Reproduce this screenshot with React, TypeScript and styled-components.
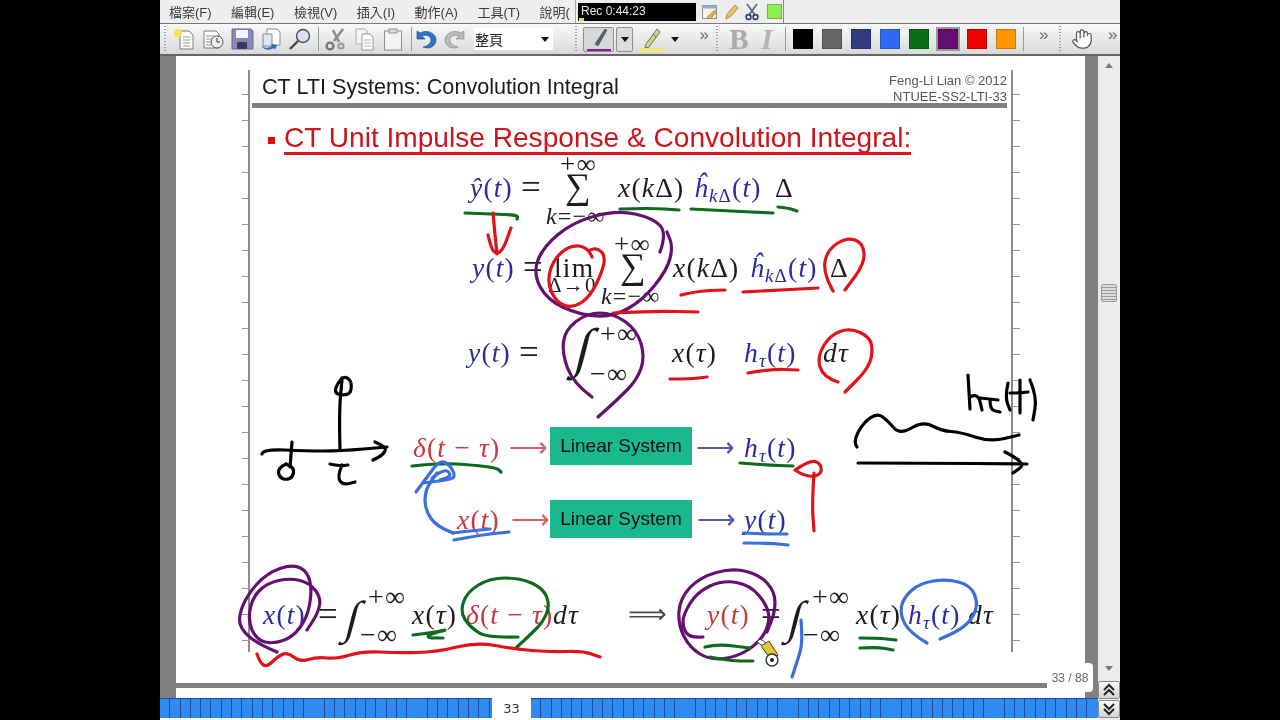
import styled, { createGlobalStyle } from "styled-components";
import { Hand } from "lucide-react";

const GlobalStyle = createGlobalStyle`
  html, body {
    margin: 0;
    height: 100%;
    background: #000;
    overflow: hidden;
  }
`;

const SANS = `"Liberation Sans", "Noto Sans CJK TC", sans-serif`;
const SERIF = `"Liberation Serif", "DejaVu Serif", serif`;

const BLUE = "#2b2b9e";
const RED = "#c8383c";
const INK = "#1c1c1c";

const MENU = ["檔案(F)", "編輯(E)", "檢視(V)", "插入(I)", "動作(A)", "工具(T)", "說明("];
const SWATCHES = ["#000000", "#666666", "#333a80", "#2f6bf0", "#0c6b16", "#660b70", "#f20000", "#ff9500"];

type Stroke = { c: string; p: number[] };

const R = "#e0121a";
const G = "#0e6b1e";
const B = "#3b6fdc";
const P = "#651070";
const K = "#000000";

// hand-written annotations, in page coordinates
const STROKES: Stroke[] = [
  { c: G, p: [465, 213, 490, 214, 518, 215, 517, 219] },
  { c: R, p: [493, 213, 495, 235, 497, 254] },
  { c: R, p: [488, 235, 491, 248, 496, 254, 503, 250, 511, 228] },
  { c: G, p: [620, 209, 650, 208, 679, 210] },
  { c: G, p: [691, 209, 730, 211, 773, 213] },
  { c: G, p: [778, 207, 788, 208, 797, 211] },
  { c: P, p: [660, 252, 667, 233, 653, 218, 617, 210, 573, 222, 543, 247, 533, 273, 547, 300, 580, 315, 613, 317, 643, 300, 667, 270, 673, 247, 667, 232] },
  { c: R, p: [592, 257, 588, 247, 570, 245, 553, 260, 547, 283, 557, 303, 573, 308, 590, 297, 603, 270, 605, 255, 597, 248, 590, 250] },
  { c: R, p: [681, 295, 697, 291, 725, 290] },
  { c: R, p: [743, 292, 780, 290, 818, 288] },
  { c: R, p: [833, 291, 823, 273, 827, 250, 847, 237, 863, 243, 865, 263, 845, 290] },
  { c: R, p: [613, 313, 653, 311, 698, 312] },
  { c: P, p: [592, 397, 573, 383, 562, 353, 565, 330, 587, 313, 613, 313, 637, 330, 645, 357, 637, 380, 617, 400, 598, 417] },
  { c: R, p: [670, 379, 690, 379, 707, 377] },
  { c: R, p: [748, 373, 770, 369, 798, 370] },
  { c: R, p: [838, 382, 823, 377, 817, 357, 830, 335, 850, 328, 870, 337, 873, 353, 867, 370, 845, 392] },
  { c: K, p: [262, 454, 263, 449, 307, 451, 340, 451, 387, 447] },
  { c: K, p: [375, 442, 387, 447, 383, 455, 373, 460] },
  { c: K, p: [340, 450, 339, 413, 342, 380] },
  { c: K, p: [342, 378, 330, 393, 350, 396, 352, 383, 347, 377, 342, 378] },
  { c: K, p: [292, 442, 291, 455, 290, 467] },
  { c: K, p: [286, 464, 278, 468, 279, 477, 286, 480, 293, 477, 294, 468, 286, 464] },
  { c: K, p: [330, 464, 340, 466, 348, 465] },
  { c: K, p: [342, 465, 337, 477, 343, 485, 355, 482] },
  { c: G, p: [412, 466, 440, 463, 473, 465, 497, 468, 501, 472] },
  { c: B, p: [453, 533, 437, 527, 425, 510, 425, 490, 437, 473] },
  { c: B, p: [416, 492, 427, 477, 440, 460, 450, 465, 456, 477, 447, 480, 423, 483] },
  { c: B, p: [432, 478, 445, 468, 452, 476, 440, 480] },
  { c: B, p: [453, 533, 470, 531, 490, 529] },
  { c: B, p: [454, 540, 480, 535, 509, 532] },
  { c: G, p: [740, 463, 765, 465, 793, 466] },
  { c: R, p: [795, 470, 810, 460, 820, 463, 822, 472, 815, 477, 803, 475, 795, 470] },
  { c: R, p: [814, 473, 812, 503, 814, 531] },
  { c: B, p: [744, 533, 767, 534, 787, 534] },
  { c: B, p: [744, 543, 767, 543, 788, 545] },
  { c: K, p: [857, 447, 853, 442, 863, 423, 877, 413, 887, 420, 900, 435, 923, 421, 942, 431, 960, 432, 990, 442, 1019, 435] },
  { c: K, p: [858, 463, 923, 463, 1027, 464] },
  { c: K, p: [1005, 452, 1027, 463, 1013, 473] },
  { c: K, p: [968, 375, 969, 392, 970, 409] },
  { c: K, p: [970, 397, 978, 393, 982, 410] },
  { c: K, p: [980, 398, 990, 399, 998, 400] },
  { c: K, p: [990, 400, 990, 410, 1000, 412] },
  { c: K, p: [1008, 383, 1005, 397, 1010, 410] },
  { c: K, p: [1020, 380, 1020, 396, 1020, 413] },
  { c: K, p: [1010, 393, 1019, 393, 1028, 392] },
  { c: K, p: [1030, 380, 1037, 397, 1033, 420] },
  { c: P, p: [277, 652, 260, 645, 243, 632, 238, 618, 247, 595, 267, 573, 293, 564, 308, 572, 312, 592, 307, 618, 293, 637, 273, 644, 257, 640, 248, 622, 252, 598, 267, 583, 290, 578, 310, 583, 321, 598, 318, 613, 307, 630] },
  { c: G, p: [413, 635, 430, 633, 450, 629, 430, 634, 427, 638, 443, 638] },
  { c: G, p: [518, 637, 487, 638, 470, 627, 460, 612, 467, 592, 490, 578, 520, 578, 543, 588, 550, 605, 543, 622, 530, 635, 517, 647] },
  { c: R, p: [257, 654, 260, 663, 267, 667, 277, 657, 287, 652, 300, 662, 317, 657, 337, 659, 363, 651, 397, 653, 437, 652, 477, 642, 513, 649, 550, 652, 583, 651, 600, 657] },
  { c: P, p: [703, 637, 690, 638, 683, 628, 683, 615, 697, 592, 723, 580, 750, 585, 767, 605, 770, 622, 760, 642, 737, 657, 710, 660, 690, 648, 678, 625, 680, 598, 700, 577, 733, 568, 760, 575, 775, 592, 775, 612, 767, 632] },
  { c: G, p: [705, 647, 717, 644, 750, 648] },
  { c: G, p: [710, 657, 730, 661, 753, 661] },
  { c: B, p: [801, 620, 803, 642, 797, 662, 792, 677] },
  { c: G, p: [860, 638, 877, 638, 896, 640] },
  { c: G, p: [860, 648, 877, 647, 893, 650] },
  { c: B, p: [927, 643, 910, 633, 900, 615, 903, 598, 920, 583, 947, 579, 970, 585, 978, 602, 973, 618, 960, 630, 940, 639] },
];

const toPath = (p: number[]) => {
  let d = `M${p[0]} ${p[1]}`;
  for (let i = 2; i < p.length - 2; i += 2) {
    d += ` Q${p[i]} ${p[i + 1]} ${(p[i] + p[i + 2]) / 2} ${(p[i + 1] + p[i + 3]) / 2}`;
  }
  return `${d} L${p[p.length - 2]} ${p[p.length - 1]}`;
};

const App = () => (
  <>
    <GlobalStyle />
    <Window>
      <MenuBar>
        <MenuList>
          {MENU.map((m) => (
            <MenuItem key={m}>{m}</MenuItem>
          ))}
        </MenuList>
        <RecPanel>
          <RecBox>Rec 0:44:23</RecBox>
          <svg width="18" height="18" viewBox="0 0 18 18">
            <rect x="1.5" y="2.5" width="14" height="13" fill="#fbf6e0" stroke="#8a8f9a" />
            <rect x="1.5" y="2.5" width="14" height="3" fill="#8fa9d8" />
            <path d="M6 14l8-7 2 2-7 7z" fill="#e5b24a" stroke="#9b7a24" strokeWidth=".6" />
          </svg>
          <svg width="16" height="18" viewBox="0 0 16 18">
            <path d="M2 16l1-5 8-9 3 3-8 9z" fill="#eec46a" stroke="#b58a32" />
          </svg>
          <svg width="14" height="18" viewBox="0 0 14 18">
            <path d="M2 1l8 11M12 1L4 12" stroke="#5b6270" strokeWidth="1.6" />
            <circle cx="3.5" cy="14" r="2.4" fill="none" stroke="#2f3e78" strokeWidth="1.6" />
            <circle cx="10.5" cy="14" r="2.4" fill="none" stroke="#2f3e78" strokeWidth="1.6" />
          </svg>
          <GreenSquare />
        </RecPanel>
      </MenuBar>

      <Toolbar>
        <Gripper $ml={4} />
        <IconGroup $ml={6} $gap={5}>
          <svg width="24" height="24" viewBox="0 0 24 24">
            <path d="M8 4h9l4 4v14H8z" fill="#fff" stroke="#7a7a7a" />
            <path d="M11 10h7M11 13h7M11 16h7M11 19h7" stroke="#9a9a9a" />
            <circle cx="6" cy="6" r="4" fill="#ffe14d" />
          </svg>
          <svg width="24" height="24" viewBox="0 0 24 24">
            <path d="M3 4h12l3 3v14H3z" fill="#fff" stroke="#7a7a7a" />
            <path d="M5 9h8M5 12h6M5 15h5M5 18h5" stroke="#8a8a8a" />
            <circle cx="16" cy="15" r="6" fill="#eee" stroke="#555" />
            <path d="M16 11v4h3" stroke="#333" fill="none" />
          </svg>
          <svg width="24" height="24" viewBox="0 0 24 24">
            <path d="M2 2h19l2 2v18H2z" fill="#8a86b8" stroke="#6a6699" />
            <rect x="6" y="3" width="12" height="8" fill="#f4f4fa" />
            <rect x="7" y="15" width="10" height="7" fill="#3c3a5c" />
          </svg>
          <svg width="24" height="24" viewBox="0 0 24 24">
            <path d="M8 2h10l3 3v13H8z" fill="#fff" stroke="#8a8a8a" />
            <path d="M4 7h9v12H4z" fill="#dfe6f2" stroke="#7a88a8" />
            <path d="M2 18c2 3 7 4 11 1l-1-2 6 1-2 5-1-2c-5 3-11 2-13-3z" fill="#2f6fc0" />
          </svg>
          <svg width="24" height="24" viewBox="0 0 24 24">
            <circle cx="15" cy="9" r="6.5" fill="#d4e4f6" stroke="#4a4a4a" strokeWidth="1.4" />
            <path d="M10 14l-8 8" stroke="#444" strokeWidth="2.4" />
          </svg>
        </IconGroup>
        <ToolSep $ml={6} />
        <IconGroup $ml={4} $gap={5}>
          <svg width="24" height="24" viewBox="0 0 24 24">
            <path d="M20 2l-9 12M10 3l6 12" stroke="#8d8d8d" strokeWidth="2.6" />
            <circle cx="7" cy="19" r="3.4" fill="none" stroke="#777" strokeWidth="2.4" />
            <circle cx="18" cy="19" r="2.6" fill="none" stroke="#999" strokeWidth="2" />
          </svg>
          <svg width="24" height="24" viewBox="0 0 24 24">
            <path d="M4 2h9l2 2v13H4z" fill="#f6f6f6" stroke="#aaa" />
            <path d="M10 7h8l3 3v13H10z" fill="#fff" stroke="#999" />
            <path d="M12 13h7M12 16h7M12 19h7" stroke="#b5b5b5" />
          </svg>
          <svg width="24" height="24" viewBox="0 0 24 24">
            <rect x="3.5" y="4" width="17" height="19" fill="#f4f4f4" stroke="#8f8f8f" />
            <rect x="8" y="2" width="8" height="4" fill="#ddd" stroke="#8f8f8f" />
          </svg>
        </IconGroup>
        <ToolSep $ml={6} />
        <IconGroup $ml={2} $gap={5}>
          <svg width="24" height="24" viewBox="0 0 24 24">
            <path d="M3 4v8h8L8 9c4-2 9 0 9 4 0 3-3 6-8 7 8 3 13-2 13-7C22 6 13 2 6 6z" fill="#2f74c8" stroke="#1e4f94" strokeWidth=".7" />
          </svg>
          <svg width="24" height="24" viewBox="0 0 24 24">
            <path d="M21 4v8h-8l3-3c-4-2-9 0-9 4 0 3 3 6 8 7-8 3-13-2-13-7C2 6 11 2 18 6z" fill="#b8b8b8" stroke="#8c8c8c" strokeWidth=".7" />
          </svg>
        </IconGroup>
        <ZoomSelect>
          整頁
          <DropArrow />
        </ZoomSelect>
        <Gripper $ml={22} />
        <PenButton>
          <svg width="24" height="24" viewBox="0 0 24 24">
            <path d="M8 17L18 2l2 1L11 19z" fill="#55606e" stroke="#3c4450" strokeWidth=".6" />
            <path d="M0 23h24" stroke="#8a1a90" strokeWidth="2" />
          </svg>
        </PenButton>
        <PenDrop>
          <DropArrow />
        </PenDrop>
        <HighlightSlot>
          <svg width="25" height="26" viewBox="0 0 25 26">
            <path d="M7 18l-1 4 4-1 11-15-3-3z" fill="#c9d888" stroke="#6b7440" />
            <path d="M14 8l3 3" stroke="#6b7440" />
            <path d="M0 24h24" stroke="#f4ee5a" strokeWidth="3" />
          </svg>
        </HighlightSlot>
        <ArrowSlot>
          <DropArrow />
        </ArrowSlot>
        <More $ml={18}>»</More>
        <Gripper $ml={5} />
        <BoldGlyph>B</BoldGlyph>
        <ItalicGlyph>I</ItalicGlyph>
        <ToolSep $ml={8} />
        <SwatchRow>
          {SWATCHES.map((c, i) => (
            <Swatch key={c} $color={c} $selected={i === 5} />
          ))}
        </SwatchRow>
        <ToolSep $ml={7} />
        <More $ml={15}>»</More>
        <Gripper $ml={8} />
        <HandSlot>
          <Hand size={22} strokeWidth={1.3} color="#555" fill="#fff" />
        </HandSlot>
        <More $ml={15}>»</More>
      </Toolbar>

      <Body>
        <LeftColumn>
          <DocArea>
            <Page>
              <Sheet>
                <SheetHeader>
                  <SheetTitle>CT LTI Systems: Convolution Integral</SheetTitle>
                  <Credit>
                    <span>Feng-Li Lian © 2012</span>
                    <span>NTUEE-SS2-LTI-33</span>
                  </Credit>
                </SheetHeader>
                <HeadRule />
                <Heading>
                  <Bullet />
                  <HeadingText>CT Unit Impulse Response &amp; Convolution Integral:</HeadingText>
                </Heading>
              </Sheet>

              {/* first formula */}
              <Formula $x={470} $y={174} $c={BLUE}><i>ŷ</i>(<i>t</i>) <Eq>=</Eq></Formula>
              <Limit $x={560} $y={151} $size={27}>+∞</Limit>
              <BigSum $x={565} $y={167}>∑</BigSum>
              <Limit $x={546} $y={204} $size={24}><i>k</i>=−∞</Limit>
              <Formula $x={618} $y={174}><i>x</i>(<i>k</i>Δ)</Formula>
              <Formula $x={694} $y={174} $c={BLUE}><i>ĥ</i><Sub><i>k</i>Δ</Sub>(<i>t</i>)</Formula>
              <Formula $x={775} $y={174}>Δ</Formula>

              {/* second formula */}
              <Formula $x={472} $y={254} $c={BLUE}><i>y</i>(<i>t</i>) <Eq>=</Eq></Formula>
              <Formula $x={554} $y={254}>lim</Formula>
              <Limit $x={548} $y={275} $size={21}>Δ→0</Limit>
              <Limit $x={614} $y={231} $size={27}>+∞</Limit>
              <BigSum $x={620} $y={247}>∑</BigSum>
              <Limit $x={601} $y={284} $size={24}><i>k</i>=−∞</Limit>
              <Formula $x={673} $y={254}><i>x</i>(<i>k</i>Δ)</Formula>
              <Formula $x={750} $y={254} $c={BLUE}><i>ĥ</i><Sub><i>k</i>Δ</Sub>(<i>t</i>)</Formula>
              <Formula $x={830} $y={254}>Δ</Formula>

              {/* third formula */}
              <Formula $x={468} $y={339} $c={BLUE}><i>y</i>(<i>t</i>) <Eq>=</Eq></Formula>
              <BigInt $x={577} $y={318} $size={54}>∫</BigInt>
              <Limit $x={600} $y={320} $size={28}>+∞</Limit>
              <Limit $x={590} $y={360} $size={28}>−∞</Limit>
              <Formula $x={672} $y={339}><i>x</i>(<i>τ</i>)</Formula>
              <Formula $x={744} $y={339} $c={BLUE}><i>h</i><Sub><i>τ</i></Sub>(<i>t</i>)</Formula>
              <Formula $x={823} $y={339}><i>d</i><i>τ</i></Formula>

              {/* block diagram */}
              <Formula $x={413} $y={434} $c={RED}><i>δ</i>(<i>t</i> − <i>τ</i>)</Formula>
              <LongArrow $x={509} $y={433} $c={RED}>⟶</LongArrow>
              <SystemBox $x={550} $y={427}>Linear System</SystemBox>
              <LongArrow $x={696} $y={433} $c={BLUE}>⟶</LongArrow>
              <Formula $x={744} $y={434} $c={BLUE}><i>h</i><Sub><i>τ</i></Sub>(<i>t</i>)</Formula>

              <Formula $x={457} $y={506} $c={RED}><i>x</i>(<i>t</i>)</Formula>
              <LongArrow $x={511} $y={505} $c={RED}>⟶</LongArrow>
              <SystemBox $x={550} $y={500}>Linear System</SystemBox>
              <LongArrow $x={697} $y={505} $c={BLUE}>⟶</LongArrow>
              <Formula $x={744} $y={506} $c={BLUE}><i>y</i>(<i>t</i>)</Formula>

              {/* bottom line */}
              <Formula $x={263} $y={601} $c={BLUE}><i>x</i>(<i>t</i>)</Formula>
              <Formula $x={318} $y={601}><Eq>=</Eq></Formula>
              <BigInt $x={347} $y={588} $size={46}>∫</BigInt>
              <Limit $x={368} $y={583} $size={28}>+∞</Limit>
              <Limit $x={360} $y={621} $size={28}>−∞</Limit>
              <Formula $x={412} $y={601}><i>x</i>(<i>τ</i>)</Formula>
              <Formula $x={466} $y={601} $c={RED}><i>δ</i>(<i>t</i> − <i>τ</i>)</Formula>
              <Formula $x={553} $y={601}><i>d</i><i>τ</i></Formula>
              <LongArrow $x={628} $y={600} $c={INK}>⟹</LongArrow>
              <Formula $x={707} $y={601} $c={RED}><i>y</i>(<i>t</i>)</Formula>
              <Formula $x={761} $y={601}><Eq>=</Eq></Formula>
              <BigInt $x={790} $y={588} $size={46}>∫</BigInt>
              <Limit $x={812} $y={583} $size={28}>+∞</Limit>
              <Limit $x={803} $y={621} $size={28}>−∞</Limit>
              <Formula $x={856} $y={601}><i>x</i>(<i>τ</i>)</Formula>
              <Formula $x={908} $y={601} $c={BLUE}><i>h</i><Sub><i>τ</i></Sub>(<i>t</i>)</Formula>
              <Formula $x={968} $y={601}><i>d</i><i>τ</i></Formula>

              <InkLayer viewBox="176 56 909 627">
                {STROKES.map((s, i) => (
                  <path key={i} d={toPath(s.p)} stroke={s.c} strokeWidth={3.2} fill="none" strokeLinecap="round" strokeLinejoin="round" />
                ))}
                <path d="M757 642l7 5 4-3-8-5z" fill="#fff" stroke="#444" />
                <path d="M761 646l8-5 9 14-6 6z" fill="#e7c53a" stroke="#444" />
                <circle cx="772" cy="660" r="6" fill="#fff" stroke="#333" strokeWidth="1.4" />
                <circle cx="772" cy="660" r="2" fill="#222" />
              </InkLayer>
            </Page>
            <PageShadow />
            <PageFoot />
          </DocArea>
          <SlideStrip>
            <StripTrack $width={332} />
            <StripNumber>33</StripNumber>
            <StripTrack />
          </SlideStrip>
        </LeftColumn>

        <ScrollColumn>
          <ScrollTrack>
            <ScrollArrow $up />
            <ScrollThumb />
            <ScrollArrow $end />
          </ScrollTrack>
          <PageButton>
            <svg width="14" height="14" viewBox="0 0 14 14">
              <path d="M2 7l5-5 5 5M2 12l5-5 5 5" fill="none" stroke="#222" strokeWidth="2" />
            </svg>
          </PageButton>
          <PageButton>
            <svg width="14" height="14" viewBox="0 0 14 14">
              <path d="M2 2l5 5 5-5M2 7l5 5 5-5" fill="none" stroke="#222" strokeWidth="2" />
            </svg>
          </PageButton>
        </ScrollColumn>
      </Body>
      <PageTip>33 / 88</PageTip>
    </Window>
  </>
);

export default App;

const Window = styled.div`
  position: relative;
  width: 960px;
  height: 720px;
  margin: 0 auto;
  display: flex;
  flex-direction: column;
  background: #ececec;
  overflow: hidden;
  font-family: ${SANS};
  filter: blur(0.35px);
`;

const MenuBar = styled.div`
  display: flex;
  height: 23px;
  background: #efefef;
`;

const MenuList = styled.div`
  display: flex;
  align-items: center;
  gap: 19.5px;
  width: 415px;
  padding-left: 9px;
  box-sizing: border-box;
  white-space: nowrap;
`;

const MenuItem = styled.span`
  flex: none;
  font-size: 13px;
  color: #3a3a3a;
`;

const RecPanel = styled.div`
  display: flex;
  align-items: center;
  gap: 5px;
  width: 209px;
  height: 23px;
  padding-left: 2px;
  box-sizing: border-box;
  border-right: 1px solid #8a8a8a;
  border-left: 1px solid #aaa;
  background: #eee;
`;

const RecBox = styled.div`
  position: relative;
  width: 118px;
  height: 18px;
  box-sizing: border-box;
  padding: 1px 0 0 3px;
  background: #000;
  color: #eaeaea;
  font-size: 12px;
  line-height: 15px;

  &::after {
    content: "";
    position: absolute;
    left: 1px;
    bottom: 0;
    width: 5px;
    height: 3px;
    background: #d9d94a;
  }
`;

const GreenSquare = styled.div`
  width: 13px;
  height: 13px;
  margin-left: 3px;
  background: #8fef4f;
  border: 1px solid #8b9a78;
`;

const Toolbar = styled.div`
  display: flex;
  align-items: center;
  height: 33px;
  box-sizing: border-box;
  border-top: 1px solid #777;
  border-bottom: 2px solid #666;
  background: linear-gradient(#f8f8f8, #e4e4e4 70%, #d8d8d8);
`;

const Gripper = styled.div<{ $ml: number }>`
  width: 2px;
  height: 26px;
  margin-left: ${(p) => p.$ml}px;
  background: repeating-linear-gradient(#9a9a9a 0 1px, transparent 1px 3px);
`;

const IconGroup = styled.div<{ $ml: number; $gap: number }>`
  display: flex;
  align-items: center;
  gap: ${(p) => p.$gap}px;
  margin-left: ${(p) => p.$ml}px;
`;

const ToolSep = styled.div<{ $ml: number }>`
  width: 1px;
  height: 24px;
  margin-left: ${(p) => p.$ml}px;
  background: #9a9a9a;
`;

const DropArrow = styled.span`
  width: 0;
  height: 0;
  border-left: 4px solid transparent;
  border-right: 4px solid transparent;
  border-top: 5px solid #111;
`;

const ZoomSelect = styled.div`
  display: flex;
  align-items: center;
  justify-content: space-between;
  width: 79px;
  height: 22px;
  margin-left: 7px;
  padding: 0 4px 0 1px;
  box-sizing: border-box;
  background: #fff;
  font-size: 14px;
  color: #222;
`;

const PenButton = styled.div`
  display: flex;
  align-items: center;
  justify-content: center;
  width: 32px;
  height: 25px;
  margin-left: 6px;
  box-sizing: border-box;
  border: 1px solid #8f8f8f;
  border-radius: 2px;
  background: #d8d8d8;
`;

const PenDrop = styled.div`
  display: flex;
  align-items: center;
  justify-content: center;
  width: 17px;
  height: 25px;
  margin-left: 2px;
  box-sizing: border-box;
  border: 1px solid #8f8f8f;
  border-radius: 2px;
  background: #dcdcdc;
`;

const HighlightSlot = styled.div`
  display: flex;
  margin-left: 6px;
`;

const ArrowSlot = styled.div`
  display: flex;
  width: 10px;
  margin-left: 7px;
`;

const More = styled.span<{ $ml: number }>`
  width: 12px;
  margin-left: ${(p) => p.$ml}px;
  margin-top: -9px;
  font-size: 17px;
  line-height: 1;
  color: #666;
`;

const BoldGlyph = styled.span`
  width: 22px;
  margin-left: 11px;
  font-family: ${SERIF};
  font-size: 29px;
  font-weight: 700;
  line-height: 1;
  color: #aaa;
  text-shadow: 1px 1px 0 #ddd;
`;

const ItalicGlyph = styled.span`
  width: 16px;
  margin-left: 10px;
  font-family: ${SERIF};
  font-size: 29px;
  font-weight: 700;
  font-style: italic;
  line-height: 1;
  color: #b5b5b5;
`;

const SwatchRow = styled.div`
  display: flex;
  gap: 9px;
  margin-left: 7px;
`;

const Swatch = styled.div<{ $color: string; $selected: boolean }>`
  width: 20px;
  height: 20px;
  box-sizing: border-box;
  background: ${(p) => p.$color};
  border: 1px solid rgba(0, 0, 0, 0.2);
  outline: ${(p) => (p.$selected ? "2px solid #9a9a9a" : "none")};
`;

const HandSlot = styled.div`
  display: flex;
  margin-left: 10px;
`;

const Body = styled.div`
  display: flex;
  flex: 1;
  min-height: 0;
`;

const LeftColumn = styled.div`
  display: flex;
  flex-direction: column;
  width: 938px;
  background: #fff;
`;

const DocArea = styled.div`
  display: flex;
  flex-direction: column;
  height: 642px;
  padding: 0 13px 0 16px;
  box-sizing: border-box;
  background: #808080;
`;

const Page = styled.div`
  position: relative;
  height: 627px;
  background: #fff;
`;

const PageShadow = styled.div`
  height: 5px;
  background: #808080;
`;

const PageFoot = styled.div`
  height: 10px;
  background: #fff;
`;

const Sheet = styled.div`
  position: absolute;
  left: 72px;
  top: 14px;
  width: 765px;
  height: 582px;
  box-sizing: border-box;
  padding: 0 4px 0 12px;
  border-left: 2px solid #8c8c8c;
  border-right: 2px solid #8c8c8c;

  &::before,
  &::after {
    content: "";
    position: absolute;
    top: 24px;
    width: 7px;
    height: 547px;
    background: repeating-linear-gradient(#999 0 1px, transparent 1px 26px);
  }

  &::before {
    left: -8px;
  }

  &::after {
    right: -9px;
  }
`;

const SheetHeader = styled.div`
  display: flex;
  justify-content: space-between;
  align-items: flex-start;
  height: 33px;
`;

const SheetTitle = styled.div`
  margin-top: 2px;
  font-size: 21.6px;
  line-height: 30px;
  color: #1a1a1a;
`;

const Credit = styled.div`
  display: flex;
  flex-direction: column;
  align-items: flex-end;
  padding-top: 3px;
  font-size: 13px;
  line-height: 16px;
  color: #555;
`;

const HeadRule = styled.div`
  height: 5px;
  margin-left: -10px;
  background: #808080;
`;

const Heading = styled.div`
  display: flex;
  align-items: center;
  gap: 9px;
  margin: 17px 0 0 6px;
`;

const Bullet = styled.span`
  width: 7px;
  height: 7px;
  background: #e00a14;
`;

const HeadingText = styled.div`
  font-size: 28.1px;
  line-height: 26px;
  padding-bottom: 1px;
  color: #d0121b;
  border-bottom: 3px solid #e0121a;
  white-space: nowrap;
`;

const Formula = styled.div<{ $x: number; $y: number; $c?: string }>`
  position: absolute;
  left: ${(p) => p.$x - 176}px;
  top: ${(p) => p.$y - 56}px;
  font-family: ${SERIF};
  font-size: 27.5px;
  letter-spacing: 1.2px;
  line-height: 28px;
  color: ${(p) => p.$c ?? INK};
  white-space: pre;
`;

const Eq = styled.span`
  display: inline-block;
  font-size: 35px;
  font-weight: 400;
  line-height: 0;
  letter-spacing: 0;
  vertical-align: -2px;
  color: ${INK};
`;

const Sub = styled.sub`
  font-size: 19px;
  line-height: 0;
  vertical-align: -5px;
`;

const Limit = styled.div<{ $x: number; $y: number; $size: number }>`
  position: absolute;
  left: ${(p) => p.$x - 176}px;
  top: ${(p) => p.$y - 56}px;
  font-family: ${SERIF};
  font-size: ${(p) => p.$size}px;
  letter-spacing: 1.2px;
  line-height: 1;
  color: ${INK};
  white-space: pre;
`;

const BigSum = styled.div<{ $x: number; $y: number }>`
  position: absolute;
  left: ${(p) => p.$x - 176}px;
  top: ${(p) => p.$y - 56}px;
  font-family: ${SERIF};
  font-size: 36px;
  line-height: 38px;
  color: ${INK};
`;

const BigInt = styled.div<{ $x: number; $y: number; $size: number }>`
  position: absolute;
  left: ${(p) => p.$x - 176}px;
  top: ${(p) => p.$y - 56}px;
  font-family: ${SERIF};
  font-size: ${(p) => p.$size}px;
  line-height: 60px;
  color: ${INK};
  transform: skewX(-14deg);
`;

const LongArrow = styled.div<{ $x: number; $y: number; $c: string }>`
  position: absolute;
  left: ${(p) => p.$x - 176}px;
  top: ${(p) => p.$y - 56}px;
  font-family: "DejaVu Sans", sans-serif;
  font-size: 26.5px;
  font-weight: 200;
  line-height: 28px;
  color: ${(p) => p.$c};
  opacity: 0.8;
`;

const SystemBox = styled.div<{ $x: number; $y: number }>`
  position: absolute;
  left: ${(p) => p.$x - 176}px;
  top: ${(p) => p.$y - 56}px;
  display: flex;
  align-items: center;
  justify-content: center;
  width: 142px;
  height: 38px;
  background: #19b88f;
  font-size: 19px;
  color: #111;
`;

const InkLayer = styled.svg`
  position: absolute;
  left: 0;
  top: 0;
  width: 909px;
  height: 627px;
  pointer-events: none;
`;

const SlideStrip = styled.div`
  display: flex;
  align-items: center;
  height: 20px;
  background: #fff;
`;

const StripTrack = styled.div<{ $width?: number }>`
  flex: ${(p) => (p.$width ? `0 0 ${p.$width}px` : "1")};
  height: 20px;
  box-sizing: border-box;
  border-top: 1px solid #1f4a8c;
  background: repeating-linear-gradient(90deg, #2f8af2 0 9.3px, #1b4f9a 9.3px 10.3px);
`;

const StripNumber = styled.div`
  width: 39px;
  text-align: center;
  font-family: "DejaVu Sans", sans-serif;
  font-size: 13px;
  color: #333;
`;

const ScrollColumn = styled.div`
  display: flex;
  flex-direction: column;
  width: 22px;
  gap: 1px;
  padding-bottom: 2px;
  box-sizing: border-box;
  background: #ececec;
`;

const ScrollTrack = styled.div`
  display: flex;
  flex: 1;
  flex-direction: column;
  align-items: center;
  padding: 7px 0 9px;
`;

const ScrollArrow = styled.span<{ $up?: boolean; $end?: boolean }>`
  width: 0;
  height: 0;
  margin-top: ${(p) => (p.$end ? "auto" : "0")};
  border-left: 4px solid transparent;
  border-right: 4px solid transparent;
  border-${(p) => (p.$up ? "bottom" : "top")}: 5px solid #777;
`;

const ScrollThumb = styled.div`
  width: 16px;
  height: 18px;
  margin-top: 216px;
  box-sizing: border-box;
  border: 1px solid #999;
  border-radius: 2px;
  background: repeating-linear-gradient(#ddd 0 2px, #999 2px 3px);
`;

const PageButton = styled.div`
  display: flex;
  align-items: center;
  justify-content: center;
  height: 18px;
  box-sizing: border-box;
  border: 1px solid #8a8a8a;
  border-radius: 2px;
  background: linear-gradient(#fafafa, #d4d4d4);
`;

const PageTip = styled.div`
  position: absolute;
  left: 887px;
  top: 663px;
  display: flex;
  align-items: center;
  justify-content: center;
  width: 46px;
  height: 29px;
  border-radius: 4px;
  background: #fff;
  font-size: 12px;
  color: #666;
`;
